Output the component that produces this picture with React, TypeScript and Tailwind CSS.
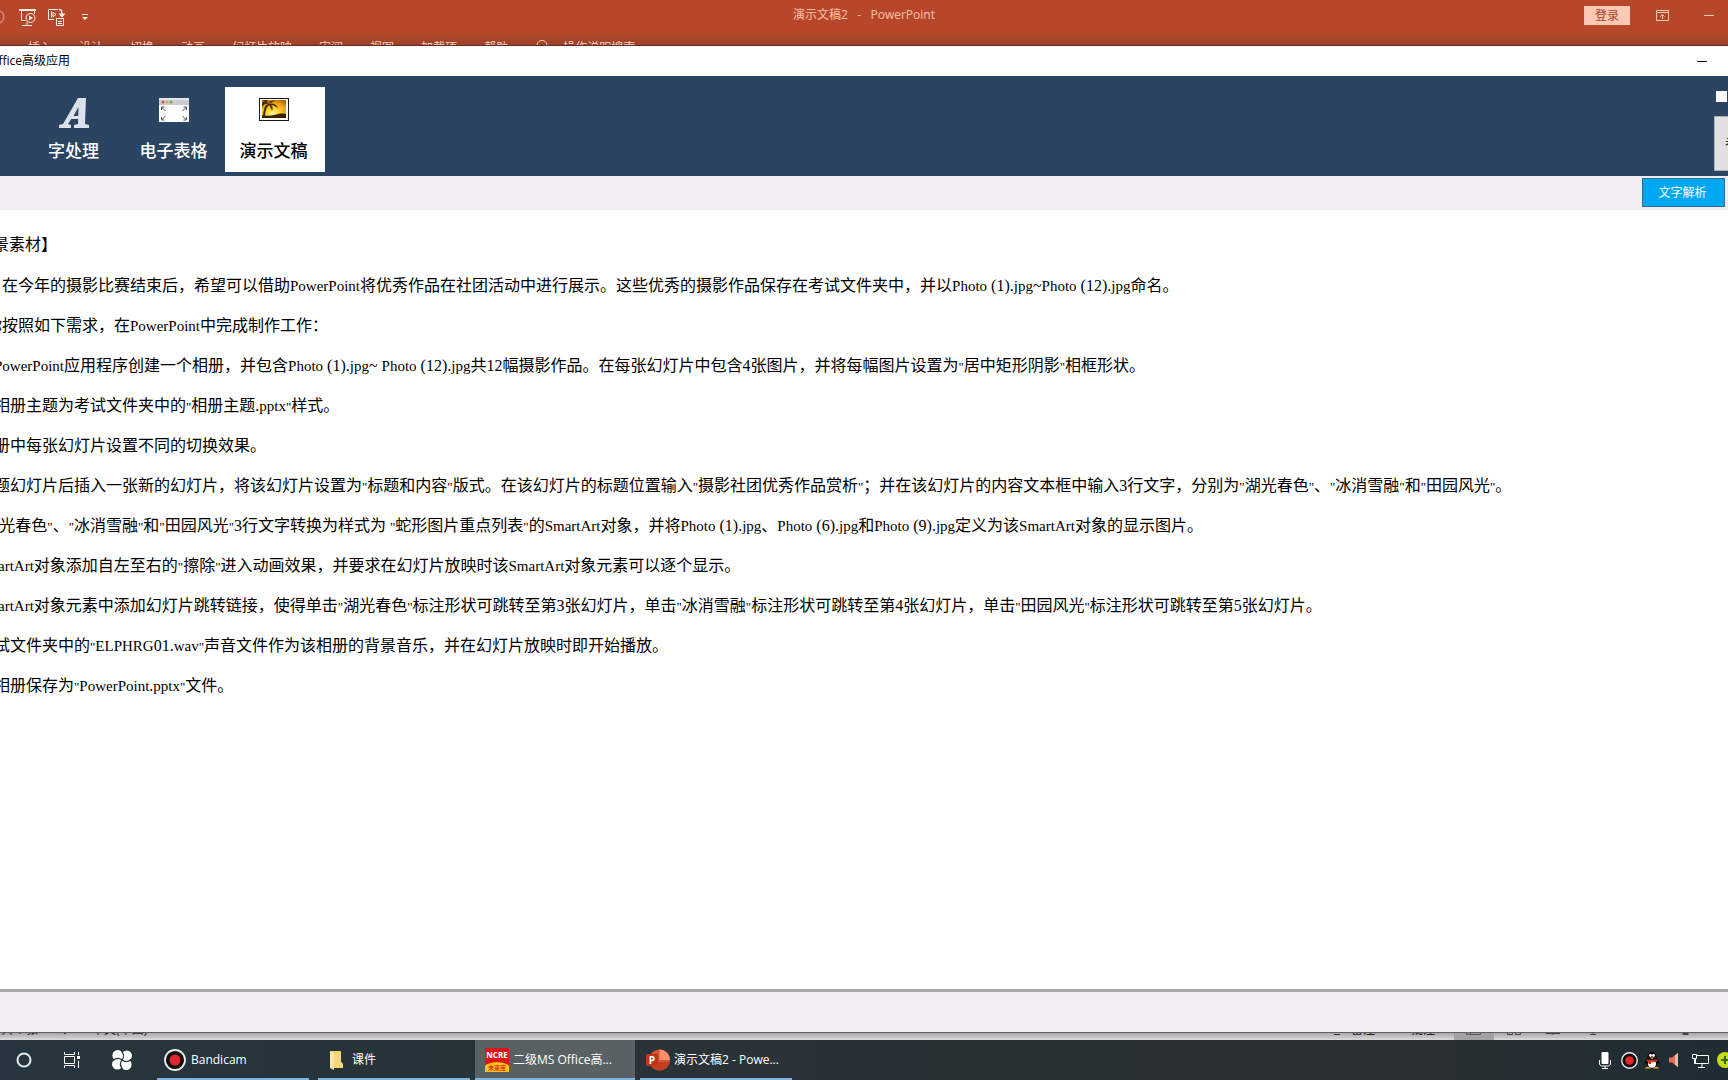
import React, { useState } from 'react';
import { clsx } from 'clsx';

const ribbonTabs = ['插入', '设计', '切换', '动画', '幻灯片放映', '审阅', '视图', '加载项', '帮助'];

const tasks = [
  '1.利用PowerPoint应用程序创建一个相册，并包含Photo (1).jpg~ Photo (12).jpg共12幅摄影作品。在每张幻灯片中包含4张图片，并将每幅图片设置为"居中矩形阴影"相框形状。',
  '2.设置相册主题为考试文件夹中的"相册主题.pptx"样式。',
  '3.为相册中每张幻灯片设置不同的切换效果。',
  '4.在标题幻灯片后插入一张新的幻灯片，将该幻灯片设置为"标题和内容"版式。在该幻灯片的标题位置输入"摄影社团优秀作品赏析"；并在该幻灯片的内容文本框中输入3行文字，分别为"湖光春色"、"冰消雪融"和"田园风光"。',
  '5.将"湖光春色"、"冰消雪融"和"田园风光"3行文字转换为样式为 "蛇形图片重点列表"的SmartArt对象，并将Photo (1).jpg、Photo (6).jpg和Photo (9).jpg定义为该SmartArt对象的显示图片。',
  '6.为SmartArt对象添加自左至右的"擦除"进入动画效果，并要求在幻灯片放映时该SmartArt对象元素可以逐个显示。',
  '7.在SmartArt对象元素中添加幻灯片跳转链接，使得单击"湖光春色"标注形状可跳转至第3张幻灯片，单击"冰消雪融"标注形状可跳转至第4张幻灯片，单击"田园风光"标注形状可跳转至第5张幻灯片。',
  '8.将考试文件夹中的"ELPHRG01.wav"声音文件作为该相册的背景音乐，并在幻灯片放映时即开始播放。',
  '9.将该相册保存为"PowerPoint.pptx"文件。',
];

// Latin words and straight quotes are set a little smaller than the Chinese text
const MixedText = ({ text }: { text: string }) => (
  <>
    {text.split(/([A-Za-z]+|")/).map((part, i) => {
      if (part === '"') return <span key={i} className="text-[13px]">"</span>;
      if (/^[A-Za-z]/.test(part)) return <span key={i} className="text-[15px]">{part}</span>;
      return part;
    })}
  </>
);

const LetterIcon = () => (
  <svg width="30" height="30" viewBox="0 0 30 30" fill="#dbe2ec">
    <path fillRule="evenodd" d="M19 0h8l-1 26 4 1v3H15v-3l4-1 .2-5h-7L9 26l3 1v3H0v-3l4-1zM19.500 9l-5 9h4.700z" />
  </svg>
);

const SheetIcon = () => (
  <svg width="30" height="24" viewBox="0 0 30 24">
    <rect width="30" height="24" fill="#fdfdfd" />
    <rect width="30" height="7" fill="#c9ccd1" />
    <rect width="30" height="2" fill="#e3e5e8" />
    <circle cx="4" cy="4" r="1.500" fill="#d9534a" />
    <circle cx="8" cy="4" r="1.500" fill="#dfa640" />
    <circle cx="12" cy="4" r="1.500" fill="#74ad4e" />
    <path d="M2.500 12V9h3M2.500 9l4 4M27.500 12V9h-3M27.500 9l-4 4M2.500 19v3h3M2.500 22l4-4M27.500 19v3h-3M27.500 22l-4-4" fill="none" stroke="#4c5a68" />
  </svg>
);

const PhotoIcon = () => (
  <svg width="30" height="23" viewBox="0 0 30 23">
    <defs>
      <radialGradient id="sun" cx="0.450" cy="0.750" r="0.800">
        <stop offset="0" stopColor="#fff7b0" />
        <stop offset="0.250" stopColor="#fbdc3f" />
        <stop offset="0.700" stopColor="#eda916" />
        <stop offset="1" stopColor="#b86d08" />
      </radialGradient>
    </defs>
    <rect width="30" height="23" fill="#1d1a17" />
    <rect x="1" y="1" width="28" height="21" fill="#fff" />
    <rect x="3" y="2" width="24" height="18" fill="url(#sun)" />
    <path d="M3 17c5 1 8 1 12 0s8-2 12-1v4H3z" fill="#3a2204" />
    <path d="M4 19c0-5 1-9 5-13l1 1C7 10 6 14 6 19zM9 6C7 5 5 6 3 9V5c2-2 4-2 6 1zM9 6c-1 1-3 4-3 8-2-3 0-7 3-8zM9 6c3-1 8-1 10 4-3-2-5-3-7-3 2 2 2 4 1 6-1-3-2-5-4-7zM9 6c0-2 3-4 8-3-3 0-5 2-8 3zM9 6c-2-1-4-3-5-4h4z" fill="#4b2b05" />
  </svg>
);

const examTabs = [
  { id: 'word', label: '字处理', icon: <LetterIcon /> },
  { id: 'excel', label: '电子表格', icon: <SheetIcon /> },
  { id: 'ppt', label: '演示文稿', icon: <PhotoIcon /> },
];

const RecordIcon = ({ size }: { size: number }) => (
  <svg width={size} height={size} viewBox="0 0 22 22">
    <circle cx="11" cy="11" r="10" fill="#120c0c" stroke="#ececec" strokeWidth="1.800" />
    <circle cx="11" cy="11" r="5.500" fill="#e0262b" />
  </svg>
);

const FolderIcon = () => (
  <svg width="15" height="20" viewBox="0 0 15 20">
    <path d="M1 1h11v11l2 2v4H1z" fill="#f0cb62" />
    <path d="M1 1l4 2v17l-4-2z" fill="#fbe6a2" />
    <path d="M5 3h7v9l2 2v4H5z" fill="#f5d77c" />
  </svg>
);

const NcreIcon = () => (
  <svg width="24" height="24" viewBox="0 0 24 24">
    <rect width="24" height="24" fill="#dd1418" />
    <path d="M0 24v-6c4-5 20-5 24 0v6z" fill="#fbc21c" />
    <text x="12" y="10" textAnchor="middle" fontSize="8" fontWeight="700" fill="#fff" fontFamily="Open Sans, sans-serif">NCRE</text>
    <text x="12" y="22" textAnchor="middle" fontSize="6" fontWeight="700" fill="#d8381a" fontFamily="Noto Sans CJK SC, sans-serif">未来库</text>
  </svg>
);

const PowerPointIcon = () => (
  <svg width="24" height="22" viewBox="0 0 24 22">
    <circle cx="13.500" cy="11" r="10.500" fill="#d9532f" />
    <path d="M13.500 .5A10.500 10.500 0 0 1 24 11H13.500z" fill="#f9906b" />
    <path d="M3.200 13a10.500 10.500 0 0 0 20.600 0z" fill="#c0401f" />
    <rect y="5" width="12" height="12" rx="1" fill="#b9381a" />
    <text x="6" y="14.500" textAnchor="middle" fontSize="10" fontWeight="700" fill="#fff" fontFamily="Open Sans, sans-serif">P</text>
  </svg>
);

const taskbarItems = [
  { label: 'Bandicam', width: 'w-[152px]', icon: <RecordIcon size={22} />, active: false },
  { label: '课件', width: 'w-[152px]', icon: <FolderIcon />, active: false },
  { label: '二级MS Office高...', width: 'w-[160px]', icon: <NcreIcon />, active: true },
  { label: '演示文稿2 - Powe...', width: 'w-[152px]', icon: <PowerPointIcon />, active: false },
];

const PowerPointHeader = () => (
  <header className="h-[46px] shrink-0 overflow-hidden border-b border-[#5e2f22] bg-linear-to-b from-[#b7472a] from-70% to-[#9c412a] text-xs text-[#fbc3ad]">
    <div className="flex h-[30px] items-center justify-between">
      <div className="flex flex-1 items-center pt-[3px]">
        <svg width="92" height="22" viewBox="0 0 92 22" fill="none" stroke="#fff0e8">
          <path d="M0 5c5 2 5 9 0 12" stroke="#d58670" strokeWidth="1.500" />
          <path d="M19 4h17" strokeWidth="2" />
          <path d="M21.500 5v9.500h4M34.500 5v3M27 16v3M22 19.500h10" />
          <circle cx="30.500" cy="12" r="4.500" />
          <path d="M29 9.500v5l4-2.500z" fill="#fff0e8" stroke="none" />
          <path d="M54 13.500h-5.500v-10H58M51.500 5.500v6M53 6v5l3-2.500zM56.500 12.500h7v7h-7zM58 15.500h4M58 17.500h4" />
          <path d="M59 3.500c3 0 3 2 3 6M59.500 7.500l2.500 3 2.500-3" strokeWidth="1.500" />
          <path d="M82 8.500h6" />
          <path d="M82 11h6l-3 3z" fill="#fff0e8" stroke="none" />
        </svg>
      </div>
      <span className="whitespace-pre">演示文稿2   -   PowerPoint</span>
      <div className="flex flex-1 items-center justify-end">
        <button type="button" className="h-[19px] w-[46px] bg-[#fdc9b5] text-xs leading-[19px] text-[#a8442a]">登录</button>
        <button type="button" aria-label="功能区显示选项" className="ml-[26px]">
          <svg width="13" height="11" viewBox="0 0 13 11" fill="none" stroke="#fcc9b6">
            <path d="M.5.5h12v10H.5zM.5 2.500h12M6.500 9V4.500M4.500 6.500l2-2 2 2" />
          </svg>
        </button>
        <button type="button" aria-label="最小化" className="mr-[14px] ml-[35px] h-px w-[10px] bg-[#fcc9b6]" />
      </div>
    </div>
    <nav className="flex gap-[27px] pt-[9px] pl-7 text-[#fbd0c0]">
      {ribbonTabs.map((tab) => (
        <button key={tab} type="button" className="text-xs leading-[18px]">{tab}</button>
      ))}
      <div className="flex gap-[14px]">
        <svg width="14" height="16" viewBox="0 0 14 16" fill="none" stroke="#fbd0c0">
          <path d="M4.500 11C0 8 2 1.500 7 1.500S14 8 9.500 11v3h-5z" />
        </svg>
        <button type="button" className="text-xs leading-[18px]">操作说明搜索</button>
      </div>
    </nav>
  </header>
);

const StatusBar = () => (
  <div className="flex h-2 shrink-0 items-end justify-between overflow-hidden border-t border-[#5f5f5f] bg-linear-to-b from-[#a9a9a9] to-[#dadada] text-xs leading-[16px] text-[#222]">
    <div className="flex h-[18px] shrink-0 gap-5 pl-px">
      <span>共 1 张</span>
      <svg width="14" height="13" viewBox="0 0 14 13" fill="none" stroke="#333">
        <path d="M1 1c3 0 5 1 6 2 1-1 3-2 6-2v9c-3 0-5 0-6 2-1-2-3-2-6-2z" />
      </svg>
      <span>中文(中国)</span>
    </div>
    <div className="flex h-[18px] shrink-0 items-start pr-[36px]">
      <span className="mr-9 flex gap-[11px]">
        <svg width="6" height="13" viewBox="0 0 6 13" stroke="#333"><path d="M0 12.500h6" /></svg>
        备注
      </span>
      <span className="mr-[19px]">批注</span>
      <span className="h-[18px] w-[40px] bg-[#a3a3a3] pl-[12px]">
        <svg width="15" height="13" viewBox="0 0 15 13" fill="none" stroke="#555"><path d="M.5 1.500h14v11H.5zM4.500 2v10" /></svg>
      </span>
      <svg className="ml-[13px]" width="185" height="13" viewBox="0 0 185 13" fill="none" stroke="#444">
        <path d="M.5 7.500h5v5h-5zM8.500 7.500h5v5h-5zM39 11.500h14M46 11v2M83 12.500h6M86 8v4" />
        <path d="M176 6h5v7h-5z" fill="#444" />
      </svg>
    </div>
  </div>
);

const Tray = () => (
  <div className="flex shrink-0 items-center text-white">
    <svg width="12" height="17" viewBox="0 0 12 17" fill="#fff">
      <rect x="2.500" width="7" height="12" rx="1" />
      <path d="M.5 8v4.500l2 1.500h7l2-1.500V8M6 14v2M3 16.500h6" fill="none" stroke="#fff" />
    </svg>
    <span className="ml-[10px]"><RecordIcon size={17} /></span>
    <svg className="ml-[6px]" width="16" height="17" viewBox="0 0 16 17">
      <path d="M3.500 6C3 2 5 0 8 0s5 2 4.500 6c2 2 3 4 3 6.500L13 11c0 3-2 5-5 5s-5-2-5-5L.5 12.500C.5 10 1.500 8 3.500 6z" fill="#0b0b0b" />
      <ellipse cx="8" cy="12" rx="4" ry="3.700" fill="#fff" />
      <circle cx="6.500" cy="3.500" r="1.400" fill="#fff" />
      <circle cx="9.500" cy="3.500" r="1.400" fill="#fff" />
      <path d="M2.500 7c3 1.500 8 1.500 11 0v2c-2 1-4 1.500-6.500 1.300V12H4.500V9.700l-2-.7z" fill="#d8291d" />
      <path d="M5.500 5.500h5L8 7zM1 16.500c1-2 4-2 6 0zM9 16.500c2-2 5-2 6 0z" fill="#f2b01a" />
    </svg>
    <svg className="ml-[9px]" width="10" height="14" viewBox="0 0 10 14">
      <path d="M0 4.500h3L9 0v14L3 9.500H0z" fill="#d9745a" />
      <path d="M6 2.200L9 0v14L6 11.700z" fill="#f3b9a5" />
    </svg>
    <svg className="ml-[13px]" width="17" height="15" viewBox="0 0 17 15" fill="none" stroke="#fff">
      <path d="M5 2.500h11.500v8H3.500V6M10 11v3M6 14.500h7M.5 1.500h4v4h-4zM2.500 5.500v5h2" />
    </svg>
    <svg className="ml-2" width="11" height="16" viewBox="0 0 11 16">
      <circle cx="8" cy="8" r="8" fill="#c9da1f" />
      <path d="M8 4v8M4 8h8" stroke="#2c6b1c" strokeWidth="2" />
    </svg>
  </div>
);

const Taskbar = () => (
  <footer className="flex h-10 shrink-0 items-center justify-between overflow-hidden bg-linear-to-r from-[#26353d] via-[#2a2f32] via-80% to-[#1f2d34] text-xs text-white">
    <div className="flex h-full items-center">
      <button type="button" aria-label="Cortana" className="ml-4">
        <svg width="16" height="16" viewBox="0 0 16 16"><circle cx="8" cy="8" r="6.500" fill="none" stroke="#e8ecee" strokeWidth="2" /></svg>
      </button>
      <button type="button" aria-label="任务视图" className="ml-8">
        <svg width="16" height="16" viewBox="0 0 16 16" fill="none" stroke="#fff">
          <path d="M.5 0v2.500h10V0M.5 16v-2.500h10V16M.5 4.500h10v7H.5zM14.500 0v3M14.500 9v7" />
          <rect x="13" y="4" width="3" height="3" fill="#fff" stroke="none" />
        </svg>
      </button>
      <button type="button" aria-label="启动器" className="ml-8">
        <svg width="20" height="20" viewBox="0 0 20 20" fill="#fff">
          <circle cx="5.800" cy="5.400" r="5.400" />
          <circle cx="14.600" cy="5.800" r="5.400" />
          <circle cx="14.200" cy="14.600" r="5.400" />
          <circle cx="5.400" cy="14.200" r="5.400" />
          {[0, 90, 180, 270].map((angle) => (
            <path key={angle} transform={`rotate(${angle} 10 10)`} d="M10 10C12 7.500 12 4 9.500 1" fill="none" stroke="#26353d" strokeWidth="1.200" />
          ))}
        </svg>
      </button>
      <div className="ml-[25px] flex h-full gap-[5px]">
        {taskbarItems.map((item, i) => (
          <button
            key={item.label}
            type="button"
            className={clsx(
              'flex h-full shrink-0 items-center gap-1 border-b-2 border-[#82b3d8] pt-[2px] whitespace-nowrap',
              item.width,
              i === 0 && 'mr-1',
              item.active ? 'bg-[#596164] pl-[10px]' : 'pl-[6px]'
            )}
          >
            <span className="flex w-6 justify-center">{item.icon}</span>
            <span>{item.label}</span>
          </button>
        ))}
      </div>
    </div>
    <Tray />
  </footer>
);

export default function App() {
  const [current, setCurrent] = useState('ppt');

  return (
    <div className="flex h-screen flex-col overflow-hidden bg-white font-['Open_Sans','Noto_Sans_CJK_SC',sans-serif]">
      <PowerPointHeader />

      <div className="flex h-[30px] shrink-0 items-center justify-between bg-white text-xs text-black">
        <div className="flex w-[70px] justify-end overflow-hidden whitespace-nowrap">二级MS Office高级应用</div>
        <button type="button" aria-label="最小化" className="mr-[21px] h-px w-[10px] bg-black" />
      </div>

      <nav className="flex h-[100px] shrink-0 justify-between overflow-hidden bg-[#2b4462]">
        <div className="flex pt-[11px] pl-[25px]">
          {examTabs.map((tab) => (
            <button
              key={tab.id}
              type="button"
              onClick={() => setCurrent(tab.id)}
              className={clsx(
                'flex h-[85px] w-[100px] flex-col items-center pt-[11px] pr-[3px] text-[17px] leading-5 font-medium',
                current === tab.id ? 'bg-white text-black' : 'text-white'
              )}
            >
              <span className="h-[43px]">{tab.icon}</span>
              <span>{tab.label}</span>
            </button>
          ))}
        </div>
        <div className="flex w-[14px] flex-col gap-[14px] pt-[15px]">
          <input type="checkbox" aria-label="置顶" className="ml-[2px] size-[11px] appearance-none bg-white" />
          <button type="button" className="h-[55px] w-[80px] border border-[#adadad] bg-[#e1e1e1] pl-[10px] text-left text-xs text-black">考</button>
        </div>
      </nav>

      <div className="flex h-[34px] shrink-0 items-start justify-end bg-[#f0eef1] pt-[2px] pr-[3px]">
        <button type="button" className="h-[29px] w-[83px] border border-[#2f6f93] bg-[#00a8f4] pr-[2px] text-xs text-white">文字解析</button>
      </div>

      <main className="min-h-0 flex-1 overflow-hidden pt-[15px] font-['Liberation_Serif','Noto_Sans_CJK_SC',serif] text-base leading-10 whitespace-nowrap text-black">
        <h2 className="mb-px -ml-[39px]">【背景素材】</h2>
        <div className="-ml-[30px]">
          <p><MixedText text="团，在今年的摄影比赛结束后，希望可以借助PowerPoint将优秀作品在社团活动中进行展示。这些优秀的摄影作品保存在考试文件夹中，并以Photo (1).jpg~Photo (12).jpg命名。" /></p>
          <p><MixedText text="请你按照如下需求，在PowerPoint中完成制作工作：" /></p>
        </div>
        <ol className="-ml-[50px]">
          {tasks.map((task) => (
            <li key={task} className="h-10"><MixedText text={task} /></li>
          ))}
        </ol>
      </main>

      <div className="h-[43px] shrink-0 border-t-3 border-[#a8a8a8] bg-[#f0eef1]" />
      <StatusBar />
      <Taskbar />
    </div>
  );
}
